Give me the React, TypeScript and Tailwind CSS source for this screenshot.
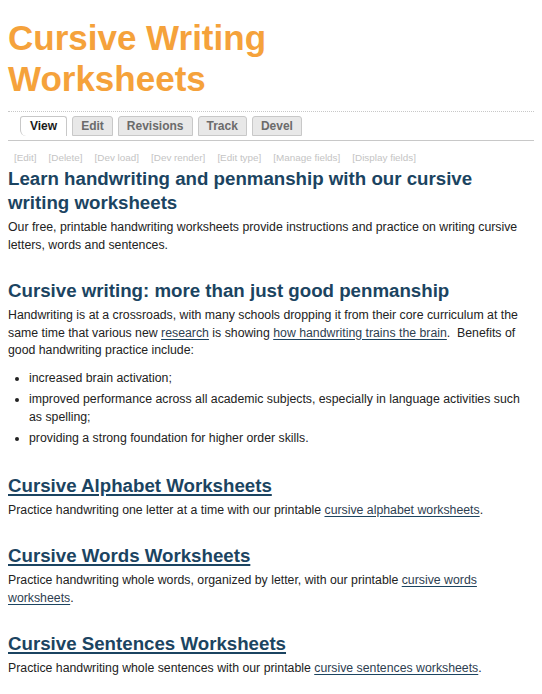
const tabs = ["View", "Edit", "Revisions", "Track", "Devel"];
const adminLinks = [
  "[Edit]",
  "[Delete]",
  "[Dev load]",
  "[Dev render]",
  "[Edit type]",
  "[Manage fields]",
  "[Display fields]",
];

function Link({ children }: { children: React.ReactNode }) {
  return (
    <a href="#" className="text-[#2e4051] underline decoration-[#1d4561] underline-offset-[2px]">
      {children}
    </a>
  );
}

function SectionTitle({ children, link }: { children: React.ReactNode; link?: boolean }) {
  return (
    <h2
      className={
        "mb-[4px] text-[18.7px] font-bold leading-[24px] text-[#1b4461] " +
        (link ? "underline decoration-[2px] underline-offset-[2px]" : "")
      }
    >
      {children}
    </h2>
  );
}

export default function App() {
  return (
    <div className="h-[694px] w-[542px] overflow-hidden bg-white font-['Liberation_Sans',Arial,sans-serif] text-[12.3px] leading-[17.5px] text-[#222]">
      <h1 className="mx-2 mt-[17px] text-[35px] font-bold leading-[41px] text-[#f5a23b]">
        Cursive Writing
        <br />
        Worksheets
      </h1>

      {/* tabs */}
      <div className="mx-2 mt-[12px] border-t border-dotted border-[#c8c8c8]">
        <ul className="flex gap-[5px] border-b border-[#c8c8c8] pb-[4px] pl-[12px] pt-[4px]">
          {tabs.map((t, i) => (
            <li
              key={t}
              className={
                "h-[20px] rounded-t-[3px] border border-[#c8c8c8] px-[8px] text-[12px] font-bold leading-[18px] " +
                (i === 0
                  ? "rounded-bl-[6px] border-b-0 bg-white px-[9px] text-[#1a1a1a]"
                  : "bg-[#e8e8e8] text-[#6b6b6b]")
              }
            >
              {t}
            </li>
          ))}
        </ul>
      </div>

      <div className="px-2">
        <div className="mt-[10px] flex gap-[12px] pl-[6px] text-[9.9px] leading-[14px] text-[#c4c4c4]">
          {adminLinks.map((l) => (
            <span key={l}>{l}</span>
          ))}
        </div>

        <div className="mt-[2px]">
          <SectionTitle>Learn handwriting and penmanship with our cursive writing worksheets</SectionTitle>
          <p className="mb-[25px]">
            Our free, printable handwriting worksheets provide instructions and practice on writing cursive
            letters, words and sentences.
          </p>

          <SectionTitle>Cursive writing: more than just good penmanship</SectionTitle>
          <p className="mb-[10px]">
            Handwriting is at a crossroads, with many schools dropping it from their core curriculum at the
            same time that various new <Link>research</Link> is showing{" "}
            <Link>how handwriting trains the brain</Link>.&nbsp; Benefits of good handwriting practice include:
          </p>
          <ul className="mb-[26px] flex list-outside list-disc flex-col gap-[4px] pl-[21px] pr-[10px]">
            <li>increased brain activation;</li>
            <li>
              improved performance across all academic subjects, especially in language activities such as
              spelling;
            </li>
            <li>providing a strong foundation for higher order skills.</li>
          </ul>

          <SectionTitle link>Cursive Alphabet Worksheets</SectionTitle>
          <p className="mb-[25px]">
            Practice handwriting one letter at a time with our printable{" "}
            <Link>cursive alphabet worksheets</Link>.
          </p>

          <SectionTitle link>Cursive Words Worksheets</SectionTitle>
          <p className="mb-[25px] pr-[30px]">
            Practice handwriting whole words, organized by letter, with our printable{" "}
            <Link>cursive words worksheets</Link>.
          </p>

          <SectionTitle link>Cursive Sentences Worksheets</SectionTitle>
          <p>
            Practice handwriting whole sentences with our printable <Link>cursive sentences worksheets</Link>.
          </p>
        </div>
      </div>
    </div>
  );
}
